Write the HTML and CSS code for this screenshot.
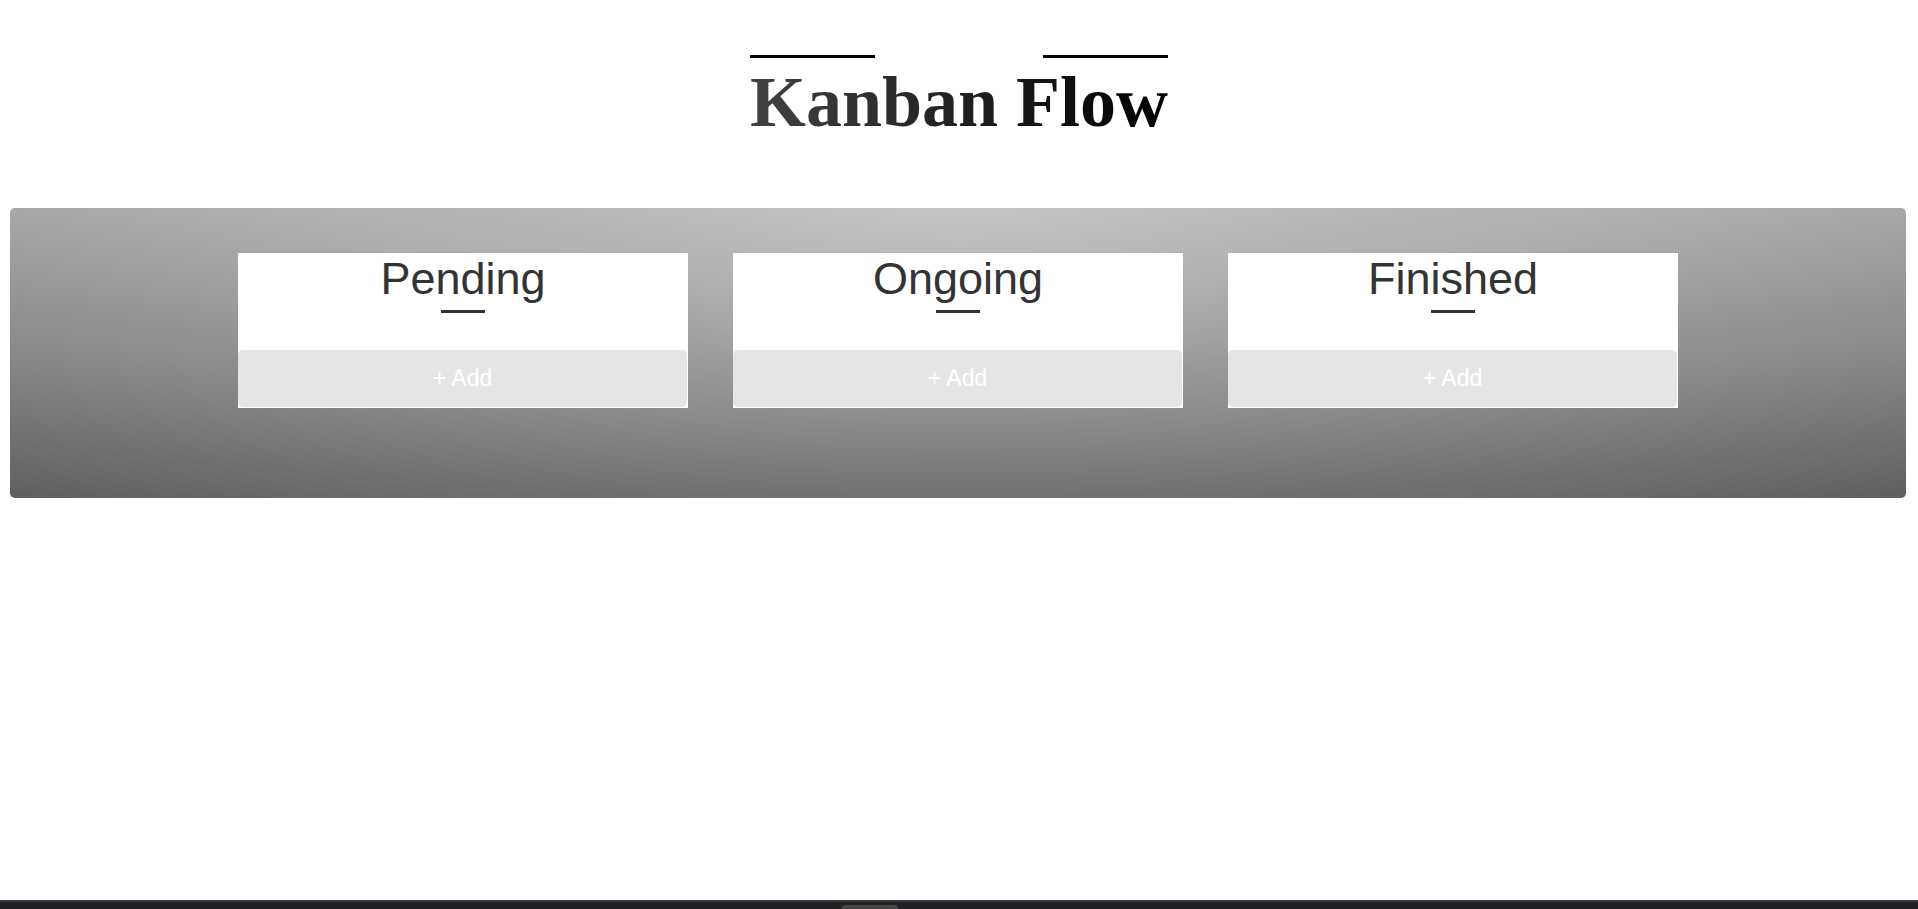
FILE: index.html
```html
<!DOCTYPE html>
<html lang="en">
<head>
<meta charset="utf-8">
<title>Kanban Flow</title>
<link rel="stylesheet" href="styles.css">
</head>
<body>
<header class="header">
  <h1 class="title">Kanban Flow</h1>
</header>
<main class="board">
  <section class="column">
    <h2 class="column-title">Pending</h2>
    <div class="column-rule"></div>
    <button class="add-btn">+ Add</button>
  </section>
  <section class="column">
    <h2 class="column-title">Ongoing</h2>
    <div class="column-rule"></div>
    <button class="add-btn">+ Add</button>
  </section>
  <section class="column">
    <h2 class="column-title">Finished</h2>
    <div class="column-rule"></div>
    <button class="add-btn">+ Add</button>
  </section>
</main>
<footer class="taskbar">
  <div class="taskbar-tab"></div>
</footer>
</body>
</html>
```
FILE: styles.css
```css
html, body {
  margin: 0;
  padding: 0;
  background: #ffffff;
}

body {
  min-height: 100vh;
  display: flex;
  flex-direction: column;
  font-family: "Liberation Sans", Arial, sans-serif;
  overflow: hidden;
}

.header {
  padding-top: 55px;
  display: flex;
  justify-content: center;
}

.title {
  margin: 0;
  display: inline-block;
  font-family: "Liberation Serif", "Times New Roman", serif;
  font-weight: bold;
  font-size: 72px;
  line-height: 83px;
  padding-top: 3px;
  border-top: 3px solid #000;
  border-image: linear-gradient(to right, #000 0, #000 30%, transparent 30%, transparent 70%, #000 70%, #000 100%) 1;
  background: linear-gradient(to right, #424242, #000000);
  -webkit-background-clip: text;
  background-clip: text;
  color: transparent;
}

.board {
  margin: 64px 12px 0 10px;
  padding: 45px 0 90px;
  border-radius: 5px;
  display: flex;
  justify-content: center;
  align-items: flex-start;
  gap: 45px;
  background:
    radial-gradient(ellipse 70% 140% at 50% 0%, rgba(255, 255, 255, 0.42) 0%, rgba(255, 255, 255, 0.14) 65%, rgba(255, 255, 255, 0) 100%),
    linear-gradient(to bottom, #9c9c9c, #5f5f5f);
}

.column {
  width: 450px;
  padding-top: 2px;
  background: #ffffff;
  display: flex;
  flex-direction: column;
  align-items: center;
}

.column-title {
  margin: 0;
  font-weight: normal;
  font-size: 45px;
  line-height: 48px;
  color: #333333;
}

.column-rule {
  width: 44px;
  height: 3px;
  background: #333333;
  margin-top: 7px;
}

.add-btn {
  margin: 37px 1px 1px;
  width: calc(100% - 1px);
  align-self: flex-end;
  height: 57px;
  border: none;
  border-radius: 5px;
  background: #e5e5e5;
  color: #ffffff;
  font-family: "Liberation Sans", Arial, sans-serif;
  font-size: 23px;
  line-height: 57px;
  padding: 0;
}

.taskbar {
  margin-top: auto;
  height: 9px;
  background: #202124;
  border-top: 2px solid #3a3a3a;
  box-sizing: border-box;
  display: flex;
  align-items: flex-end;
}

.taskbar-tab {
  margin-left: 842px;
  width: 56px;
  height: 4px;
  background: #464646;
  border-radius: 4px 4px 0 0;
}
```
